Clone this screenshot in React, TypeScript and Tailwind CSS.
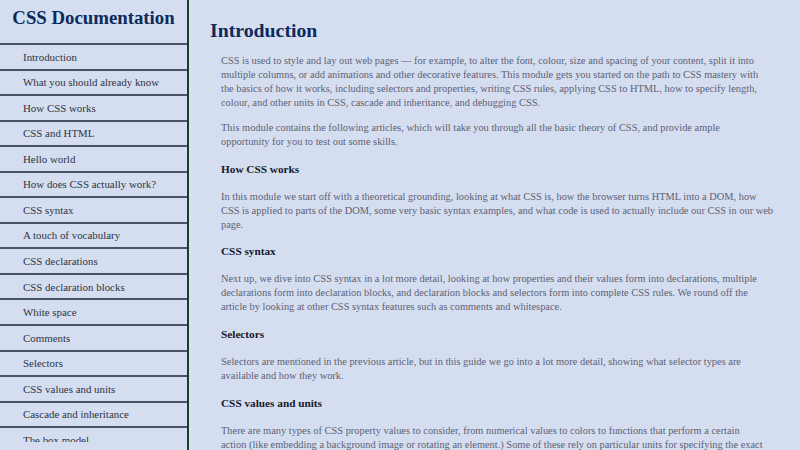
const navItems = [
  "Introduction",
  "What you should already know",
  "How CSS works",
  "CSS and HTML",
  "Hello world",
  "How does CSS actually work?",
  "CSS syntax",
  "A touch of vocabulary",
  "CSS declarations",
  "CSS declaration blocks",
  "White space",
  "Comments",
  "Selectors",
  "CSS values and units",
  "Cascade and inheritance",
  "The box model",
  "Debugging CSS",
];

const intro = [
  [
    "CSS is used to style and lay out web pages — for example, to alter the font, colour, size and spacing of your content, split it into",
    "multiple columns, or add animations and other decorative features. This module gets you started on the path to CSS mastery with",
    "the basics of how it works, including selectors and properties, writing CSS rules, applying CSS to HTML, how to specify length,",
    "colour, and other units in CSS, cascade and inheritance, and debugging CSS.",
  ],
  [
    "This module contains the following articles, which will take you through all the basic theory of CSS, and provide ample",
    "opportunity for you to test out some skills.",
  ],
];

const sections = [
  {
    title: "How CSS works",
    lines: [
      "In this module we start off with a theoretical grounding, looking at what CSS is, how the browser turns HTML into a DOM, how",
      "CSS is applied to parts of the DOM, some very basic syntax examples, and what code is used to actually include our CSS in our web",
      "page.",
    ],
  },
  {
    title: "CSS syntax",
    lines: [
      "Next up, we dive into CSS syntax in a lot more detail, looking at how properties and their values form into declarations, multiple",
      "declarations form into declaration blocks, and declaration blocks and selectors form into complete CSS rules. We round off the",
      "article by looking at other CSS syntax features such as comments and whitespace.",
    ],
  },
  {
    title: "Selectors",
    lines: [
      "Selectors are mentioned in the previous article, but in this guide we go into a lot more detail, showing what selector types are",
      "available and how they work.",
    ],
  },
  {
    title: "CSS values and units",
    lines: [
      "There are many types of CSS property values to consider, from numerical values to colors to functions that perform a certain",
      "action (like embedding a background image or rotating an element.) Some of these rely on particular units for specifying the exact",
      "values they are representing — do you want your box to be 30 pixels wide, or 30 centimeters, or 30 ems?",
    ],
  },
];

function Para({ lines, className }: { lines: string[]; className?: string }) {
  return (
    <p className={className}>
      {lines.map((l) => (
        <span key={l} className="block whitespace-nowrap">
          {l}
        </span>
      ))}
    </p>
  );
}

export default function App() {
  return (
    <div className="flex h-screen w-full overflow-hidden bg-[#d5def0] font-['Liberation_Serif',serif]">
      <nav className="w-[189px] shrink-0 border-r-2 border-[#1f3a30] h-full">
        <header className="h-[43px] flex items-center justify-center pb-[6px]">
          <h1 className="text-[18.8px] font-bold text-[#0c2a5b]">CSS Documentation</h1>
        </header>
        <ul className="h-[399px] overflow-hidden border-t-2 border-[#4a5366]">
          {navItems.map((item) => (
            <li key={item} className="h-[25.56px] border-b-2 border-[#4a5366] flex items-center pl-[23px] text-[10.9px] text-[#2c3344]">
              {item}
            </li>
          ))}
        </ul>
      </nav>
      <div className="w-[3px] shrink-0 bg-[#d3e6e4]" />
      <main className="flex-1 min-w-0 pl-[18px] pr-[24px] pt-[16px]">
        <h2 className="text-[19.8px] font-bold text-[#0c2a5b] leading-[28px]">Introduction</h2>
        <div className="pl-[11px] text-[10.4px] leading-[14px] text-[#5d6274]">
          <Para className="mt-[10px]" lines={intro[0]} />
          <Para className="mt-[11px]" lines={intro[1]} />
          {sections.map((s) => (
            <section key={s.title}>
              <h3 className="mt-[11.7px] text-[11.25px] font-bold text-[#151a2c] leading-[16px]">{s.title}</h3>
              <Para className="mt-[13px]" lines={s.lines} />
            </section>
          ))}
        </div>
      </main>
    </div>
  );
}
